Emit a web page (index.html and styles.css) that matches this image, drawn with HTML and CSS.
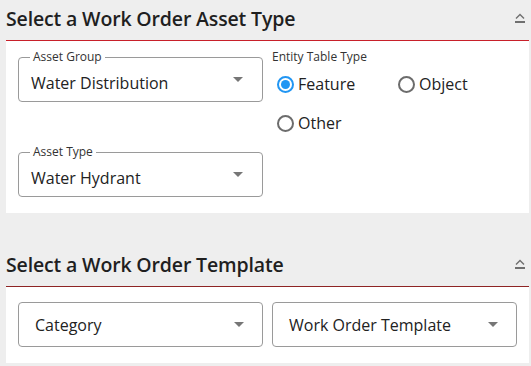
FILE: index.html
```html
<!DOCTYPE html>
<html>
<head>
<meta charset="utf-8">
<link rel="stylesheet" href="styles.css">
</head>
<body>
<section class="section">
  <div class="header">
    <h2 class="title">Select a Work Order Asset Type</h2>
    <svg class="collapse" width="12" height="12" viewBox="0 0 12 12"><path d="M2 6.5 L6 2.5 L10 6.5" fill="none" stroke="#6f6f6f" stroke-width="1.4"/><rect x="1" y="9" width="10" height="2" fill="#6f6f6f"/></svg>
  </div>
  <div class="panel panel-active">
    <div class="grid">
      <div class="col">
        <div class="field labeled">
          <span class="flabel">Asset Group</span>
          <span class="value">Water Distribution</span>
          <span class="arrow"></span>
        </div>
        <div class="field labeled">
          <span class="flabel">Asset Type</span>
          <span class="value">Water Hydrant</span>
          <span class="arrow"></span>
        </div>
      </div>
      <div class="col">
        <div class="glabel">Entity Table Type</div>
        <div class="radios">
          <div class="radio"><span class="circle checked"></span><span class="rtext">Feature</span></div>
          <div class="radio"><span class="circle"></span><span class="rtext">Object</span></div>
          <div class="radio"><span class="circle"></span><span class="rtext">Other</span></div>
        </div>
      </div>
    </div>
  </div>
</section>
<section class="section second">
  <div class="header">
    <h2 class="title">Select a Work Order Template</h2>
    <svg class="collapse" width="12" height="12" viewBox="0 0 12 12"><path d="M2 6.5 L6 2.5 L10 6.5" fill="none" stroke="#6f6f6f" stroke-width="1.4"/><rect x="1" y="9" width="10" height="2" fill="#6f6f6f"/></svg>
  </div>
  <div class="panel panel-dark">
    <div class="grid">
      <div class="field plain">
        <span class="value">Category</span>
        <span class="arrow"></span>
      </div>
      <div class="field plain">
        <span class="value">Work Order Template</span>
        <span class="arrow"></span>
      </div>
    </div>
  </div>
</section>
</body>
</html>
```
FILE: styles.css
```css
* { box-sizing: border-box; }
body {
  margin: 0;
  background: #eeeeee;
  font-family: "Open Sans", "Noto Sans", sans-serif;
  color: #212121;
}
.section {
  margin: 0 2px 0 6px;
}
.second {
  margin-top: 33px;
}
.header {
  height: 40px;
  display: flex;
  align-items: center;
  justify-content: space-between;
  padding-right: 3px;
}
.title {
  margin: 0;
  font-size: 19.5px;
  font-weight: 600;
  color: #1f1f1f;
  letter-spacing: -0.15px;
  margin-top: -3px;
}
.collapse {
  margin-top: -4px;
}
.panel {
  background: #ffffff;
  padding: 16px 12px 16px 12px;
}
.panel-active { border-top: 1px solid #c8202a; }
.panel-dark { border-top: 1px solid #8e2424; padding-top: 15px; }
.grid {
  display: grid;
  grid-template-columns: 245px 245px;
  column-gap: 9px;
}
.col {
  display: flex;
  flex-direction: column;
}
.field {
  position: relative;
  height: 45px;
  border: 1px solid #9a9a9a;
  border-radius: 4px;
  display: flex;
  align-items: center;
  justify-content: space-between;
  padding: 0 19px 0 12px;
}
.field.labeled + .field.labeled { margin-top: 50px; }
.field.labeled .value { margin-top: 6px; }
.field.plain { padding-left: 16px; padding-right: 18px; }
.flabel {
  position: absolute;
  top: -8px;
  left: 11px;
  background: #fff;
  padding: 0 3px 0 3px;
  font-size: 12px;
  line-height: 14px;
  color: #333;
}
.value {
  font-size: 16px;
  color: #222;
}
.arrow {
  width: 0;
  height: 0;
  border-left: 5px solid transparent;
  border-right: 5px solid transparent;
  border-top: 5px solid #767676;
}
.glabel {
  font-size: 12px;
  color: #333;
  margin-top: -8px;
  line-height: 16px;
}
.radios {
  display: grid;
  grid-template-columns: 121px 121px;
  row-gap: 13px;
  margin-top: 6px;
  padding-left: 5px;
}
.radio {
  display: flex;
  align-items: center;
  height: 26px;
}
.circle {
  width: 17px;
  height: 17px;
  border-radius: 50%;
  border: 2px solid #6c6c6c;
  margin-right: 4px;
  flex: none;
  position: relative;
}
.circle.checked {
  border-color: #2196f3;
}
.circle.checked::after {
  content: "";
  position: absolute;
  left: 2px;
  top: 2px;
  width: 9px;
  height: 9px;
  border-radius: 50%;
  background: #2196f3;
}
.rtext {
  font-size: 16px;
  color: #222;
}
```
